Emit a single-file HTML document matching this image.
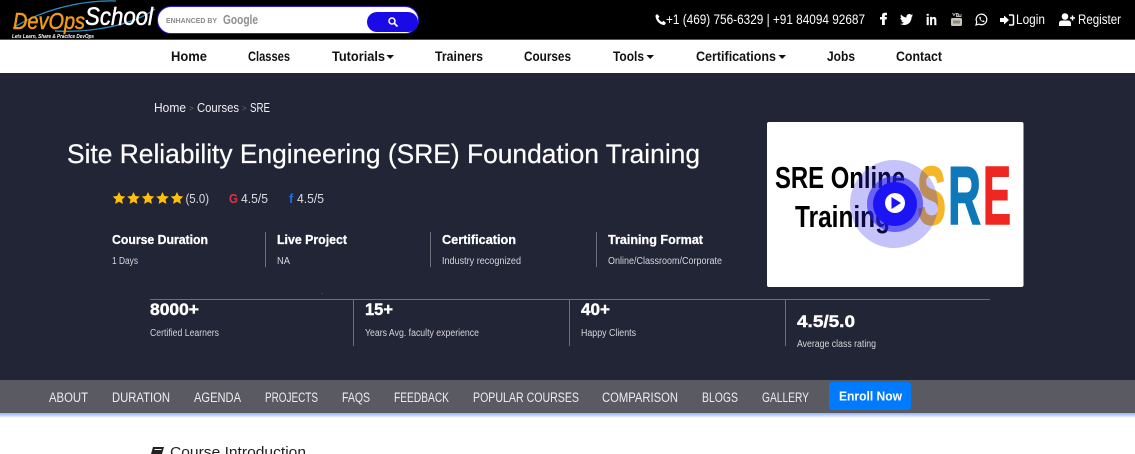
<!DOCTYPE html>
<html><head><meta charset="utf-8"><style>
html,body{margin:0;padding:0;width:1135px;height:454px;overflow:hidden;background:#fff}
body{position:relative;font-family:"Liberation Sans",sans-serif}
.bar{position:absolute;left:0;width:1135px}
svg.t{position:absolute;left:0;top:0}
svg.t text{font-family:"Liberation Sans",sans-serif}
.nv{font-weight:700;font-size:14px;fill:#111}
.tp{fill:#fff;font-size:13.5px}
.h{font-weight:700;font-size:12.5px;fill:#fff;stroke:#fff;stroke-width:.25}
.s{font-size:10px;fill:#d5d5da}
.n{font-weight:700;font-size:16.5px;fill:#fff;stroke:#fff;stroke-width:.4}
.m{font-size:13.5px;fill:#ececf0}
.r{font-size:13px;fill:#dcdce0}
.v{fill:#6d6f7b}
</style></head><body>
<div class="bar" style="top:0;height:39px;background:#000"></div>
<div class="bar" style="top:39px;height:1px;background:#555"></div>
<div class="bar" style="top:40px;height:33px;background:#fff"></div>
<div class="bar" style="top:73px;height:307px;background:#222536"></div>
<div class="bar" style="top:380px;height:33px;background:#5a5a62"></div>
<div class="bar" style="top:413px;height:5px;background:linear-gradient(#8fb0ff,#fff)"></div>

<svg class="t" width="1135" height="454" viewBox="0 0 1135 454">
<!-- logo -->
<path d="M13 28C45 8 85 0 116 1" fill="none" stroke="#2c8fc4" stroke-width="1.2"/>
<path d="M55 31C95 33 135 24 155 9" fill="none" stroke="#2c8fc4" stroke-width="1.4"/>
<text x="13" y="29" font-style="italic" font-size="23" fill="#f39a13" stroke="#f39a13" stroke-width=".5" textLength="72" lengthAdjust="spacingAndGlyphs">DevOps</text>
<text x="85" y="25" font-style="italic" font-size="25" fill="#fff" stroke="#fff" stroke-width=".5" textLength="68" lengthAdjust="spacingAndGlyphs">School</text>
<text x="12" y="38" font-style="italic" font-weight="700" font-size="5" fill="#fff" textLength="82" lengthAdjust="spacingAndGlyphs">Lets Learn, Share &amp; Practice DevOps</text>

<!-- search -->
<rect x="157.500" y="6.500" width="261" height="27" rx="13.500" fill="#fff" stroke="#2a1ce0"/>
<text x="166" y="23" font-size="7.500" font-weight="700" fill="#8a8a8a" textLength="51" lengthAdjust="spacingAndGlyphs">ENHANCED BY</text>
<text x="223" y="24" font-size="13" font-weight="700" fill="#8f8f8f" textLength="35" lengthAdjust="spacingAndGlyphs">Google</text>
<rect x="367" y="12" width="51" height="20" rx="10" fill="#1a0ae6"/>
<g transform="translate(387 16)"><circle cx="5" cy="5" r="3" fill="none" stroke="#fff" stroke-width="1.500"/><path d="M7.200 7.200L10.500 10.500" stroke="#fff" stroke-width="1.700"/></g>

<!-- top right -->
<path transform="translate(654.500 13)" d="M2.500 1L5 3.500 3.800 5.200C4.500 7 5.800 8.200 7.600 9L9 7.800 11.500 10 10 12C5 12 1 7 1 2.500Z" fill="#fff"/>
<text class="tp" x="666" y="24" textLength="199" lengthAdjust="spacingAndGlyphs">+1 (469) 756-6329 | +91 84094 92687</text>
<path d="M882 25V19.500H880V17H882V15.500Q882 12.800 885 12.800H887V15.200H885.500Q884.800 15.200 884.800 16V17H887L886.600 19.500H884.800V25Z" fill="#fff"/>
<path transform="translate(900 14)" d="M13 1.500L11.600 3C11.600 7.500 8.500 11 4.300 11 2.700 11 1.200 10.500 0 9.800 1.400 9.900 2.900 9.500 3.900 8.700 2.700 8.600 1.700 7.900 1.300 6.800L2.600 6.700C1.200 6.300.3 5.100.3 3.700L1.600 4.100C.6 3.200.3 1.600 1 .5 2.500 2.300 4.500 3.300 6.500 3.500 6.100 1.600 7.500 0 9.200 0 10 0 10.700.3 11.200.9L12.800.3 11.800 1.700Z" fill="#fff"/>
<text x="926" y="25" font-size="15" font-weight="700" fill="#fff" stroke="#fff" stroke-width=".3" textLength="11" lengthAdjust="spacingAndGlyphs">in</text>
<g transform="translate(951 13)"><path d="M1.500 0L3 2.500 4.500 0M5.500 .5H7V3.500H5.500ZM8 1V3.500H10V1" stroke="#bbb" fill="none" stroke-width=".9"/><rect x="0" y="5" width="11" height="8" rx="1.500" fill="#c8c4b8"/><rect x="2" y="7.500" width="7" height="3" fill="#8a8a80"/></g>
<g transform="translate(975 13)"><path d="M1 12L1.800 8.900A5.300 5.300 0 1 1 4 11.100Z" fill="none" stroke="#fff" stroke-width="1.200"/><path d="M4.500 3.800L5.500 3.800 6 5.300 5.500 6C6 7 6.800 7.700 7.500 8L8.200 7.300 9.500 8 9.300 9C7 9.500 3.500 6.500 4.500 3.800Z" fill="#fff"/></g>
<g transform="translate(1000 14)"><path d="M0 4H4V1.500L9 6 4 10.500V8H0Z" fill="#fff"/><path d="M9 1H12.500Q13.500 1 13.500 2V10Q13.500 11 12.500 11H9" fill="none" stroke="#fff" stroke-width="1.500"/></g>
<text class="tp" x="1016" y="24" textLength="29" lengthAdjust="spacingAndGlyphs">Login</text>
<g transform="translate(1059 13)"><circle cx="6" cy="3.500" r="3.300" fill="#fff"/><path d="M0 13V10.500Q0 7.500 3 7.500H9Q12 7.500 12 10.500V13Z" fill="#fff"/><path d="M11 5H16M13.500 2.500V7.500" stroke="#fff" stroke-width="1.500"/></g>
<text class="tp" x="1078" y="24" textLength="43" lengthAdjust="spacingAndGlyphs">Register</text>

<!-- nav -->
<text class="nv" x="171" y="61" textLength="36" lengthAdjust="spacingAndGlyphs">Home</text>
<text class="nv" x="248" y="61" textLength="42" lengthAdjust="spacingAndGlyphs">Classes</text>
<text class="nv" x="332" y="61" textLength="53" lengthAdjust="spacingAndGlyphs">Tutorials</text>
<path d="M386.500 55H394L390.200 59Z" fill="#111"/>
<text class="nv" x="435" y="61" textLength="48" lengthAdjust="spacingAndGlyphs">Trainers</text>
<text class="nv" x="524" y="61" textLength="47" lengthAdjust="spacingAndGlyphs">Courses</text>
<text class="nv" x="613" y="61" textLength="31" lengthAdjust="spacingAndGlyphs">Tools</text>
<path d="M646.500 55H654L650.200 59Z" fill="#111"/>
<text class="nv" x="696" y="61" textLength="80" lengthAdjust="spacingAndGlyphs">Certifications</text>
<path d="M778.500 55H786L782.200 59Z" fill="#111"/>
<text class="nv" x="827" y="61" textLength="28" lengthAdjust="spacingAndGlyphs">Jobs</text>
<text class="nv" x="896" y="61" textLength="46" lengthAdjust="spacingAndGlyphs">Contact</text>

<!-- hero -->
<text x="154" y="112" font-size="13" fill="#f0f0f3" textLength="32" lengthAdjust="spacingAndGlyphs">Home</text>
<text x="189" y="111" font-size="8" fill="#666a78">&gt;</text>
<text x="197" y="112" font-size="13" fill="#f0f0f3" textLength="42" lengthAdjust="spacingAndGlyphs">Courses</text>
<text x="242" y="111" font-size="8" fill="#666a78">&gt;</text>
<text x="250" y="112" font-size="13" fill="#f0f0f3" textLength="20" lengthAdjust="spacingAndGlyphs">SRE</text>
<text x="67" y="163" font-size="27" fill="#fff" stroke="#fff" stroke-width=".2" textLength="633" lengthAdjust="spacingAndGlyphs">Site Reliability Engineering (SRE) Foundation Training</text>

<g fill="#ffc107">
<path d="M119 192L120.900 196 125.300 196.500 122 199.500 122.900 203.900 119 201.700 115.100 203.900 116 199.500 112.700 196.500 117.100 196Z"/>
<path transform="translate(14.500 0)" d="M119 192L120.900 196 125.300 196.500 122 199.500 122.900 203.900 119 201.700 115.100 203.900 116 199.500 112.700 196.500 117.100 196Z"/>
<path transform="translate(29 0)" d="M119 192L120.900 196 125.300 196.500 122 199.500 122.900 203.900 119 201.700 115.100 203.900 116 199.500 112.700 196.500 117.100 196Z"/>
<path transform="translate(43.500 0)" d="M119 192L120.900 196 125.300 196.500 122 199.500 122.900 203.900 119 201.700 115.100 203.900 116 199.500 112.700 196.500 117.100 196Z"/>
<path transform="translate(58 0)" d="M119 192L120.900 196 125.300 196.500 122 199.500 122.900 203.900 119 201.700 115.100 203.900 116 199.500 112.700 196.500 117.100 196Z"/>
</g>
<text class="r" x="185.500" y="203" textLength="23.500" lengthAdjust="spacingAndGlyphs">(5.0)</text>
<text x="229" y="203" font-size="13" font-weight="700" fill="#dc3545" textLength="9" lengthAdjust="spacingAndGlyphs">G</text>
<text class="r" x="241" y="203" textLength="27" lengthAdjust="spacingAndGlyphs">4.5/5</text>
<text x="289" y="203" font-size="13" font-weight="700" fill="#1a6fe8">f</text>
<text class="r" x="297" y="203" textLength="27" lengthAdjust="spacingAndGlyphs">4.5/5</text>

<text class="h" x="112" y="244" textLength="96" lengthAdjust="spacingAndGlyphs">Course Duration</text>
<text class="s" x="112" y="264" textLength="26" lengthAdjust="spacingAndGlyphs">1 Days</text>
<rect class="v" x="265" y="232" width="1" height="35"/>
<text class="h" x="277" y="244" textLength="70" lengthAdjust="spacingAndGlyphs">Live Project</text>
<text class="s" x="277" y="264" textLength="13" lengthAdjust="spacingAndGlyphs">NA</text>
<rect class="v" x="430" y="232" width="1" height="35"/>
<text class="h" x="442" y="244" textLength="74" lengthAdjust="spacingAndGlyphs">Certification</text>
<text class="s" x="442" y="264" textLength="79" lengthAdjust="spacingAndGlyphs">Industry recognized</text>
<rect class="v" x="596" y="232" width="1" height="35"/>
<text class="h" x="608" y="244" textLength="95" lengthAdjust="spacingAndGlyphs">Training Format</text>
<text class="s" x="608" y="264" textLength="114" lengthAdjust="spacingAndGlyphs">Online/Classroom/Corporate</text>

<rect class="v" x="150" y="299" width="840" height="1"/>
<rect x="321" y="293" width="2" height="1" fill="#b01030"/>
<rect class="v" x="353" y="300" width="1" height="46"/>
<rect class="v" x="569" y="300" width="1" height="46"/>
<rect class="v" x="785" y="300" width="1" height="46"/>
<text class="n" x="150" y="315" textLength="49" lengthAdjust="spacingAndGlyphs">8000+</text>
<text class="s" x="150" y="336" textLength="69" lengthAdjust="spacingAndGlyphs">Certified Learners</text>
<text class="n" x="365" y="315" textLength="28" lengthAdjust="spacingAndGlyphs">15+</text>
<text class="s" x="365" y="336" textLength="114" lengthAdjust="spacingAndGlyphs">Years Avg. faculty experience</text>
<text class="n" x="581" y="315" textLength="29" lengthAdjust="spacingAndGlyphs">40+</text>
<text class="s" x="581" y="336" textLength="55" lengthAdjust="spacingAndGlyphs">Happy Clients</text>
<text class="n" x="797" y="327" textLength="58" lengthAdjust="spacingAndGlyphs">4.5/5.0</text>
<text class="s" x="797" y="347" textLength="79" lengthAdjust="spacingAndGlyphs">Average class rating</text>

<!-- video card -->
<g transform="translate(767 122)">
<rect width="256.500" height="165" rx="2" fill="#fff"/>
<text x="8" y="66" font-weight="700" font-size="31" fill="#000" textLength="130" lengthAdjust="spacingAndGlyphs">SRE Online</text>
<text x="28" y="105" font-weight="700" font-size="31" fill="#000" textLength="95" lengthAdjust="spacingAndGlyphs">Training</text>
<text x="150" y="102" font-weight="700" font-size="83" fill="#f4b728" stroke="#f4b728" stroke-width="1.500" textLength="29" lengthAdjust="spacingAndGlyphs">S</text>
<text x="181" y="102" font-weight="700" font-size="83" fill="#0f78b8" stroke="#0f78b8" stroke-width="1.500" textLength="33" lengthAdjust="spacingAndGlyphs">R</text>
<text x="216" y="102" font-weight="700" font-size="83" fill="#ee2722" stroke="#ee2722" stroke-width="1.500" textLength="28" lengthAdjust="spacingAndGlyphs">E</text>
<circle cx="127" cy="82" r="44" fill="#2a22ee" fill-opacity=".27"/>
<circle cx="128" cy="82" r="28" fill="#2a22ee" fill-opacity=".6"/>
<circle cx="128" cy="82" r="22" fill="#1c14f5"/>
<circle cx="128" cy="81" r="10" fill="#fff"/>
<path d="M124.500 75L134 81 124.500 87Z" fill="#1c14f5"/>
</g>

<!-- section menu -->
<text class="m" x="49" y="402" textLength="39" lengthAdjust="spacingAndGlyphs">ABOUT</text>
<text class="m" x="112" y="402" textLength="58" lengthAdjust="spacingAndGlyphs">DURATION</text>
<text class="m" x="194" y="402" textLength="47" lengthAdjust="spacingAndGlyphs">AGENDA</text>
<text class="m" x="265" y="402" textLength="53" lengthAdjust="spacingAndGlyphs">PROJECTS</text>
<text class="m" x="342" y="402" textLength="28" lengthAdjust="spacingAndGlyphs">FAQS</text>
<text class="m" x="394" y="402" textLength="55" lengthAdjust="spacingAndGlyphs">FEEDBACK</text>
<text class="m" x="473" y="402" textLength="106" lengthAdjust="spacingAndGlyphs">POPULAR COURSES</text>
<text class="m" x="602" y="402" textLength="76" lengthAdjust="spacingAndGlyphs">COMPARISON</text>
<text class="m" x="702" y="402" textLength="36" lengthAdjust="spacingAndGlyphs">BLOGS</text>
<text class="m" x="762" y="402" textLength="47" lengthAdjust="spacingAndGlyphs">GALLERY</text>
<rect x="829" y="382" width="82" height="28" rx="3" fill="#007bff"/>
<text x="839" y="400.500" font-size="13" font-weight="700" fill="#fff" textLength="63" lengthAdjust="spacingAndGlyphs">Enroll Now</text>

<!-- course intro -->
<path d="M153 447H164L162 454H151Z" fill="#222"/><path d="M154.500 449.500H161.500" stroke="#fff"/>
<text x="170" y="457" font-size="15" fill="#222" textLength="136" lengthAdjust="spacingAndGlyphs">Course Introduction</text>
</svg>
</body></html>
